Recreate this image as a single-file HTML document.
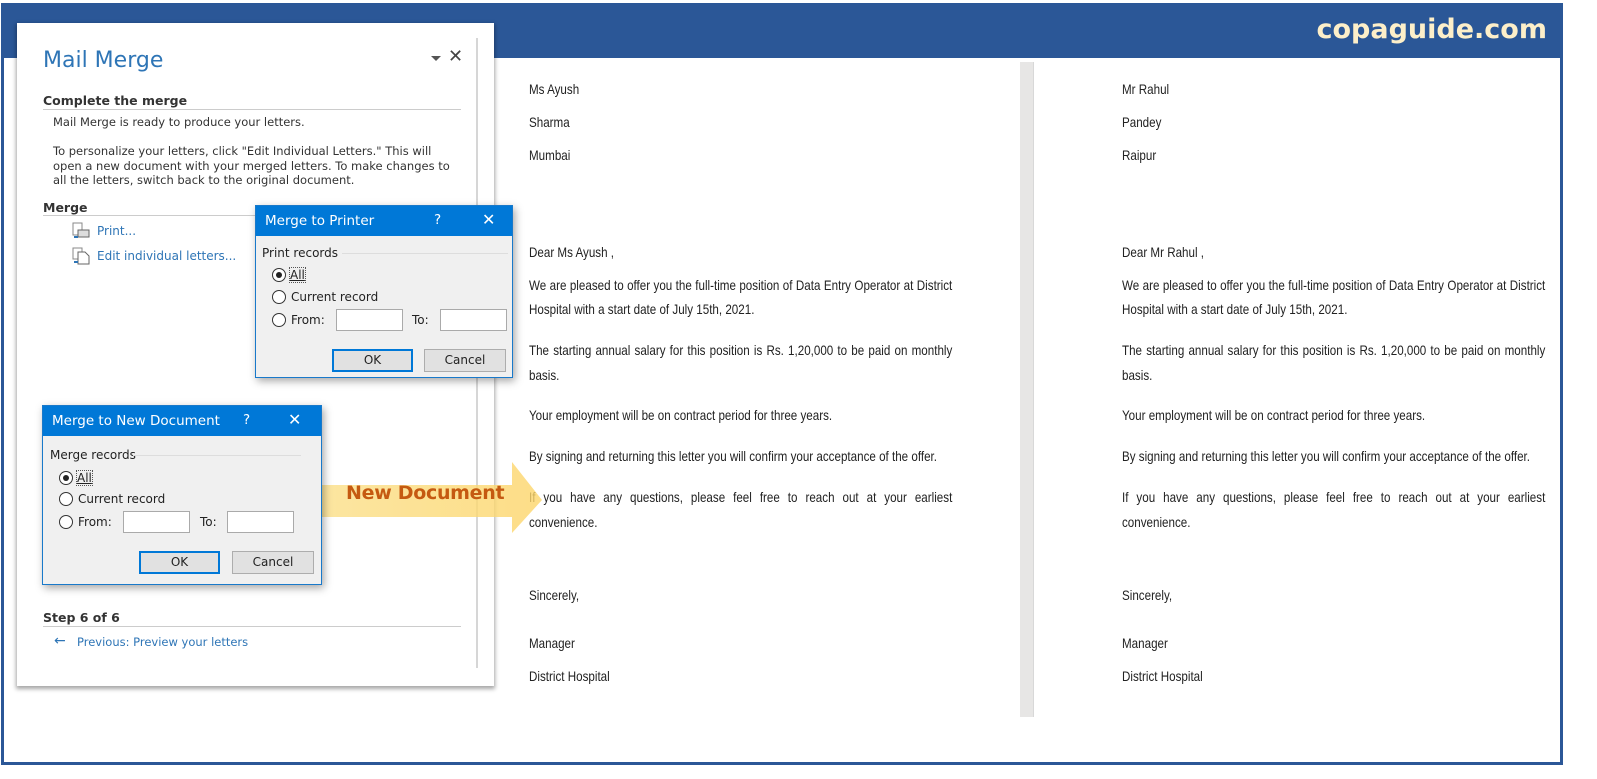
<!DOCTYPE html>
<html><head><meta charset="utf-8"><style>
*{margin:0;padding:0;box-sizing:border-box}
body{width:1597px;height:779px;background:#fff;position:relative;overflow:hidden;font-family:"Liberation Sans",sans-serif}
.abs{position:absolute}
.frame{left:1px;top:3px;width:1562px;height:762px;border:3px solid #2b5797;border-top:none}
.hdr{left:1px;top:3px;width:1562px;height:55px;background:#2b5797}
.logo{right:50px;top:14px;color:#fdefc9;font:bold 27px "DejaVu Sans","Liberation Sans",sans-serif}
.gray{left:1020px;top:62px;width:14px;height:655px;background:#e7e6e5;border-right:1px solid #d8d8d8}
.l{position:absolute;font-family:"Liberation Sans",sans-serif;font-size:14px;color:#222;white-space:nowrap;line-height:16px;transform:scaleX(0.83);transform-origin:0 0}
.j{width:510px;text-align:justify;text-align-last:justify}
.panel{left:17px;top:23px;width:477px;height:663px;background:#fff;box-shadow:0 2px 4px 1px rgba(0,0,0,.35)}
.ui{font-family:"DejaVu Sans","Liberation Sans",sans-serif}
.dlg{background:#f0f0f0;border:1px solid #1979ca;box-shadow:2px 3px 8px rgba(0,0,0,.35)}
.tb{background:#0078d7;color:#fff;height:30px;font:13.5px "DejaVu Sans",sans-serif;padding:7px 0 0 9px;position:relative}
.rad{position:absolute;width:14px;height:14px;border:1px solid #333;border-radius:50%;background:#fff}
.rad.on::after{content:"";position:absolute;left:3px;top:3px;width:6px;height:6px;border-radius:50%;background:#222}
.t12{font:12px "DejaVu Sans",sans-serif;color:#222;position:absolute;white-space:nowrap}
.inp{position:absolute;background:#fff;border:1px solid #aaa;height:22px}
.btn{position:absolute;height:23px;border:1px solid #adadad;background:#e1e1e1;font:12px "DejaVu Sans",sans-serif;text-align:center;line-height:21px;color:#222}
.btn.ok{border:2px solid #0078d7;line-height:19px}
</style></head><body>
<div class="abs hdr"></div>
<div class="abs frame"></div>
<div class="abs logo">copaguide.com</div>
<div class="abs gray"></div>

<div class="l" style="left:529px;top:81px">Ms Ayush</div>
<div class="l" style="left:529px;top:114px">Sharma</div>
<div class="l" style="left:529px;top:147px">Mumbai</div>
<div class="l" style="left:529px;top:244px">Dear Ms Ayush ,</div>
<div class="l j" style="left:529px;top:277px">We are pleased to offer you the full-time position of Data Entry Operator at District</div>
<div class="l" style="left:529px;top:301px">Hospital with a start date of July 15th, 2021.</div>
<div class="l j" style="left:529px;top:342px">The starting annual salary for this position is Rs. 1,20,000 to be paid on monthly</div>
<div class="l" style="left:529px;top:367px">basis.</div>
<div class="l" style="left:529px;top:407px">Your employment will be on contract period for three years.</div>
<div class="l" style="left:529px;top:448px">By signing and returning this letter you will confirm your acceptance of the offer.</div>
<div class="l j" style="left:529px;top:489px">If you have any questions, please feel free to reach out at your earliest</div>
<div class="l" style="left:529px;top:514px">convenience.</div>
<div class="l" style="left:529px;top:587px">Sincerely,</div>
<div class="l" style="left:529px;top:635px">Manager</div>
<div class="l" style="left:529px;top:668px">District Hospital</div>

<div class="l" style="left:1122px;top:81px">Mr Rahul</div>
<div class="l" style="left:1122px;top:114px">Pandey</div>
<div class="l" style="left:1122px;top:147px">Raipur</div>
<div class="l" style="left:1122px;top:244px">Dear Mr Rahul ,</div>
<div class="l j" style="left:1122px;top:277px">We are pleased to offer you the full-time position of Data Entry Operator at District</div>
<div class="l" style="left:1122px;top:301px">Hospital with a start date of July 15th, 2021.</div>
<div class="l j" style="left:1122px;top:342px">The starting annual salary for this position is Rs. 1,20,000 to be paid on monthly</div>
<div class="l" style="left:1122px;top:367px">basis.</div>
<div class="l" style="left:1122px;top:407px">Your employment will be on contract period for three years.</div>
<div class="l" style="left:1122px;top:448px">By signing and returning this letter you will confirm your acceptance of the offer.</div>
<div class="l j" style="left:1122px;top:489px">If you have any questions, please feel free to reach out at your earliest</div>
<div class="l" style="left:1122px;top:514px">convenience.</div>
<div class="l" style="left:1122px;top:587px">Sincerely,</div>
<div class="l" style="left:1122px;top:635px">Manager</div>
<div class="l" style="left:1122px;top:668px">District Hospital</div>

<div class="abs panel">
  <div class="abs" style="left:459px;top:15px;width:2px;height:630px;background:#d6d6d6"></div>
  <div class="abs ui" style="left:26px;top:25px;font-size:22px;color:#2e75b6">Mail Merge</div>
  <div class="abs" style="left:414px;top:33px;width:0;height:0;border-left:5px solid transparent;border-right:5px solid transparent;border-top:5px solid #555"></div>
  <div class="abs ui" style="left:431px;top:23px;font-size:18px;color:#444">✕</div>
  <div class="abs ui" style="left:26px;top:70px;font-size:12.5px;font-weight:bold;color:#333">Complete the merge</div>
  <div class="abs" style="left:26px;top:86px;width:418px;height:1px;background:#ccc"></div>
  <div class="abs ui" style="left:36px;top:92px;font-size:11.5px;color:#333">Mail Merge is ready to produce your letters.</div>
  <div class="abs ui" style="left:36px;top:121px;font-size:11.5px;color:#333;line-height:14.5px;white-space:nowrap">To personalize your letters, click "Edit Individual Letters." This will<br>open a new document with your merged letters. To make changes to<br>all the letters, switch back to the original document.</div>
  <div class="abs ui" style="left:26px;top:177px;font-size:12.5px;font-weight:bold;color:#333">Merge</div>
  <div class="abs" style="left:26px;top:192px;width:418px;height:1px;background:#ccc"></div>
  <svg class="abs" style="left:55px;top:199px" width="18" height="18"><rect x="1" y="1" width="9" height="12" fill="none" stroke="#888"/><rect x="6" y="8" width="11" height="7" fill="#ddd" stroke="#666"/><rect x="2" y="14" width="4" height="2" fill="#2e75b6"/></svg>
  <div class="abs ui" style="left:80px;top:201px;font-size:12px;color:#2e75b6">Print...</div>
  <svg class="abs" style="left:55px;top:224px" width="18" height="18"><rect x="1" y="1" width="9" height="11" fill="none" stroke="#888"/><path d="M6 5h7l4 4v8H6z" fill="#fff" stroke="#666"/><rect x="2" y="14" width="4" height="2" fill="#2e75b6"/></svg>
  <div class="abs ui" style="left:80px;top:226px;font-size:12px;color:#2e75b6">Edit individual letters...</div>
  <div class="abs ui" style="left:26px;top:587px;font-size:12.5px;font-weight:bold;color:#333">Step 6 of 6</div>
  <div class="abs" style="left:26px;top:603px;width:418px;height:1px;background:#ccc"></div>
  <div class="abs ui" style="left:37px;top:610px;font-size:14px;color:#2e75b6">←</div>
  <div class="abs ui" style="left:60px;top:612px;font-size:11.5px;color:#2e75b6">Previous: Preview your letters</div>
</div>

<div class="abs dlg" style="left:255px;top:205px;width:258px;height:173px">
  <div class="tb">Merge to Printer<span style="position:absolute;left:178px;top:6px">?</span><span style="position:absolute;left:226px;top:4px;font-size:16px">✕</span></div>
  <div class="t12" style="left:6px;top:40px">Print records</div>
  <div class="abs" style="left:86px;top:47px;width:166px;height:1px;background:#ddd"></div>
  <div class="rad on" style="left:16px;top:62px"></div><div class="t12" style="left:34px;top:62px;text-decoration:underline;outline:1px dotted #555">All</div>
  <div class="rad" style="left:16px;top:84px"></div><div class="t12" style="left:35px;top:84px">Current record</div>
  <div class="rad" style="left:16px;top:107px"></div><div class="t12" style="left:35px;top:107px">From:</div>
  <div class="inp" style="left:80px;top:103px;width:67px"></div>
  <div class="t12" style="left:156px;top:107px">To:</div>
  <div class="inp" style="left:184px;top:103px;width:67px"></div>
  <div class="btn ok" style="left:76px;top:143px;width:81px">OK</div>
  <div class="btn" style="left:168px;top:143px;width:82px">Cancel</div>
</div>

<svg class="abs" style="left:320px;top:460px;opacity:.8" width="225" height="75"><defs><linearGradient id="g" x1="0" x2="1"><stop offset="0" stop-color="#fce08a"/><stop offset="1" stop-color="#fdd66a"/></linearGradient></defs><path d="M0 25H192V2L222 40L192 73V57H0Z" fill="url(#g)"/></svg>
<div class="abs" style="left:346px;top:482px;font:bold 19px 'DejaVu Sans','Liberation Sans',sans-serif;color:#c55a11;letter-spacing:-0.3px">New Document</div>

<div class="abs dlg" style="left:42px;top:405px;width:280px;height:180px">
  <div class="tb">Merge to New Document<span style="position:absolute;left:200px;top:6px">?</span><span style="position:absolute;left:245px;top:4px;font-size:16px">✕</span></div>
  <div class="t12" style="left:7px;top:42px">Merge records</div>
  <div class="abs" style="left:90px;top:49px;width:168px;height:1px;background:#ddd"></div>
  <div class="rad on" style="left:16px;top:65px"></div><div class="t12" style="left:34px;top:65px;text-decoration:underline;outline:1px dotted #555">All</div>
  <div class="rad" style="left:16px;top:86px"></div><div class="t12" style="left:35px;top:86px">Current record</div>
  <div class="rad" style="left:16px;top:109px"></div><div class="t12" style="left:35px;top:109px">From:</div>
  <div class="inp" style="left:80px;top:105px;width:67px"></div>
  <div class="t12" style="left:157px;top:109px">To:</div>
  <div class="inp" style="left:184px;top:105px;width:67px"></div>
  <div class="btn ok" style="left:96px;top:145px;width:81px">OK</div>
  <div class="btn" style="left:189px;top:145px;width:82px">Cancel</div>
</div>
</body></html>
